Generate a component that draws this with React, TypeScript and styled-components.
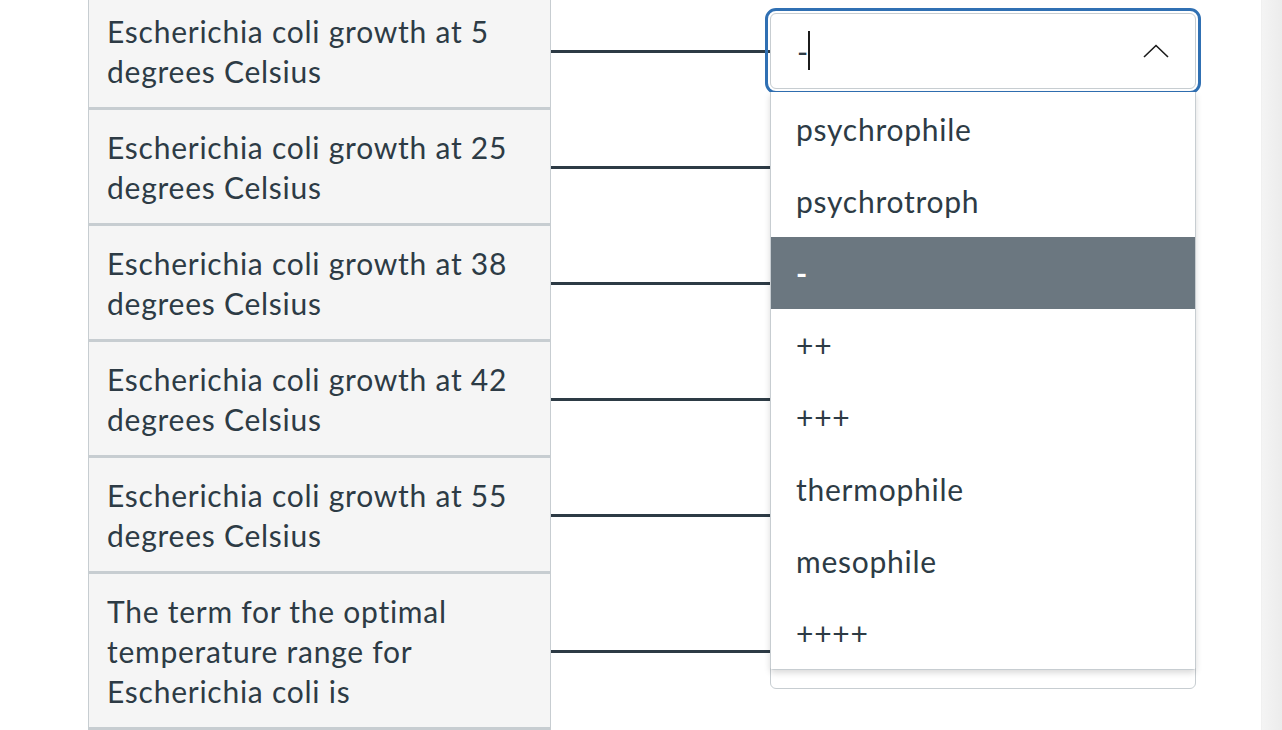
import styled, { createGlobalStyle } from "styled-components";

const GlobalStyle = createGlobalStyle`
  html, body {
    margin: 0;
    padding: 0;
    background: #ffffff;
    overflow: hidden;
  }
  body {
    font-family: Lato, "Open Sans", sans-serif;
    color: #2d3b45;
  }
`;

const prompts = [
  "Escherichia coli growth at 5 degrees Celsius",
  "Escherichia coli growth at 25 degrees Celsius",
  "Escherichia coli growth at 38 degrees Celsius",
  "Escherichia coli growth at 42 degrees Celsius",
  "Escherichia coli growth at 55 degrees Celsius",
  "The term for the optimal temperature range for Escherichia coli is",
];

const options = [
  "psychrophile",
  "psychrotroph",
  "-",
  "++",
  "+++",
  "thermophile",
  "mesophile",
  "++++",
];

const Page = styled.div`
  display: flex;
  width: 1282px;
  height: 730px;
  overflow: hidden;
`;

const Main = styled.main`
  flex: 1;
  padding-left: 88px;
`;

const Scrollbar = styled.div`
  width: 20px;
  height: 100%;
  background: linear-gradient(to right, #f4f4f4, #ececec);
  border-left: 1px solid #f0f0f0;
`;

const Matches = styled.div`
  display: grid;
  grid-template-columns: 463px 219px 426px;
  margin-top: -6px;
`;

const Prompt = styled.div`
  box-sizing: border-box;
  background: #f5f5f5;
  border-left: 1px solid #c7cdd1;
  border-right: 1px solid #c7cdd1;
  border-bottom: 3px solid #c7cdd1;
  padding: 17px 24px 16px 18px;
  font-size: 30px;
  line-height: 40px;
  letter-spacing: 0.75px;
`;

const Connector = styled.div`
  align-self: center;
  height: 3px;
  background: #2d3b45;
  margin-top: -2px;
`;

const SelectCell = styled.div`
  position: relative;
  align-self: center;
  margin-top: -3px;
`;

const SelectBox = styled.div<{ $focused?: boolean }>`
  box-sizing: border-box;
  height: 76px;
  border: 1px solid #c7cdd1;
  border-radius: 6px;
  background: #fff;
  display: flex;
  align-items: center;
  justify-content: space-between;
  padding: 0 26px 0 26px;
  font-size: 30px;
  outline: ${(p) => (p.$focused ? "3px solid #3070b3" : "none")};
  outline-offset: 2px;
`;

const Value = styled.span`
  display: flex;
  align-items: center;
  color: #2d3b45;
`;

const Caret = styled.span`
  display: inline-block;
  width: 1.5px;
  height: 39px;
  background: #1c1c1c;
`;

const Menu = styled.ul`
  position: absolute;
  z-index: 2;
  top: 79px;
  left: 0;
  right: 0;
  margin: 0;
  padding: 1px 0 0;
  list-style: none;
  background: #fff;
  border: 1px solid #c7cdd1;
  border-top: none;
  border-radius: 0 0 4px 4px;
  box-shadow: 0 3px 6px rgba(0, 0, 0, 0.15);
`;

const Option = styled.li<{ $active?: boolean }>`
  height: 72px;
  display: flex;
  align-items: center;
  padding-left: 25px;
  font-size: 30px;
  letter-spacing: 0.75px;
  background: ${(p) => (p.$active ? "#6b7780" : "#fff")};
  color: ${(p) => (p.$active ? "#fff" : "#2d3b45")};
  font-weight: ${(p) => (p.$active ? 700 : 400)};
`;

function ChevronUp() {
  return (
    <svg width="26" height="14" viewBox="0 0 26 14" fill="none">
      <path d="M1 13 L13 1.5 L25 13" stroke="#1a1a1a" strokeWidth="1.6" />
    </svg>
  );
}

function ChevronDown() {
  return (
    <svg width="26" height="14" viewBox="0 0 26 14" fill="none">
      <path d="M1 1 L13 12.5 L25 1" stroke="#1a1a1a" strokeWidth="1.6" />
    </svg>
  );
}

export default function App() {
  return (
    <>
      <GlobalStyle />
      <Page>
        <Main>
          <Matches>
            {prompts.map((text, i) => (
              <>
                <Prompt key={"p" + i}>{text}</Prompt>
                <Connector key={"c" + i} />
                <SelectCell key={"s" + i}>
                  {i === 0 ? (
                    <>
                      <SelectBox $focused>
                        <Value>
                          -<Caret />
                        </Value>
                        <ChevronUp />
                      </SelectBox>
                      <Menu>
                        {options.map((o) => (
                          <Option key={o} $active={o === "-"}>
                            {o}
                          </Option>
                        ))}
                      </Menu>
                    </>
                  ) : (
                    <SelectBox>
                      <Value />
                      <ChevronDown />
                    </SelectBox>
                  )}
                </SelectCell>
              </>
            ))}
          </Matches>
        </Main>
        <Scrollbar />
      </Page>
    </>
  );
}
